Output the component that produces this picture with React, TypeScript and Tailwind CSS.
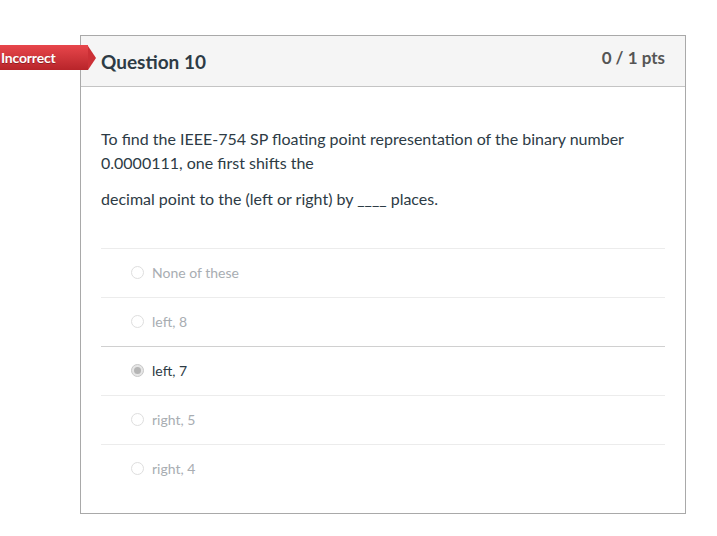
import React from "react";

const answers = [
  { label: "None of these", selected: false },
  { label: "left, 8", selected: false },
  { label: "left, 7", selected: true },
  { label: "right, 5", selected: false },
  { label: "right, 4", selected: false },
];

function Radio({ selected }: { selected: boolean }) {
  if (selected) {
    return (
      <span className="flex h-[13px] w-[13px] items-center justify-center rounded-full border border-[#c8c8c8] bg-[#e6e6e6]">
        <span className="h-[7px] w-[7px] rounded-full bg-[#b5b5b5]" />
      </span>
    );
  }
  return <span className="block h-[13px] w-[13px] rounded-full border border-[#dedede] bg-white" />;
}

export default function App() {
  return (
    <div className="relative min-h-[536px] bg-white pl-[80px] pt-[35px] text-[#2d3b45]" style={{ fontFamily: "Lato, 'Open Sans', sans-serif" }}>
      <div className="absolute left-0 top-[45px] flex h-[25px] items-center">
        <div className="flex h-[25px] w-[88px] items-center bg-gradient-to-b from-[#e8464b] to-[#b8242a] pl-[1px] text-[14px] font-bold tracking-[-0.2px] text-white [text-shadow:0_1px_0_rgba(0,0,0,0.3)]">
          Incorrect
        </div>
        <div className="h-0 w-0 border-y-[12.5px] border-l-[8px] border-y-transparent border-l-[#cc3036]" />
      </div>
      <div className="h-[479px] w-[606px] border border-[#a9a9a9]">
        <div className="flex h-[51px] items-center justify-between border-b border-[#c4c4c4] bg-[#f5f5f5] px-[20px]">
          <span className="pt-[2px] text-[19px] font-bold text-[#2d3b45]">Question 10</span>
          <span className="pb-[6px] text-[17px] font-bold text-[#555555]">0 / 1 pts</span>
        </div>
        <div className="px-[20px] pt-[40px]">
          <div className="text-[16px] leading-[24px] text-[#2d3b45]">
            <p>To find the IEEE-754 SP floating point representation of the binary number 0.0000111, one first shifts the</p>
            <p className="mt-[12px]">decimal point to the (left or right) by ____ places.</p>
          </div>
          <div className="mt-[37px]">
            {answers.map((a, i) => (
              <div
                key={i}
                className={`flex h-[49px] items-center pb-[2px] border-t ${i === 2 ? "border-[#d0d0d0]" : "border-[#ececec]"}`}
              >
                <span className="ml-[30px] mr-[8px]">
                  <Radio selected={a.selected} />
                </span>
                <span className={`text-[14px] ${a.selected ? "text-[#2d3b45]" : "text-[#a8adb2]"}`}>{a.label}</span>
              </div>
            ))}
          </div>
        </div>
      </div>
    </div>
  );
}
